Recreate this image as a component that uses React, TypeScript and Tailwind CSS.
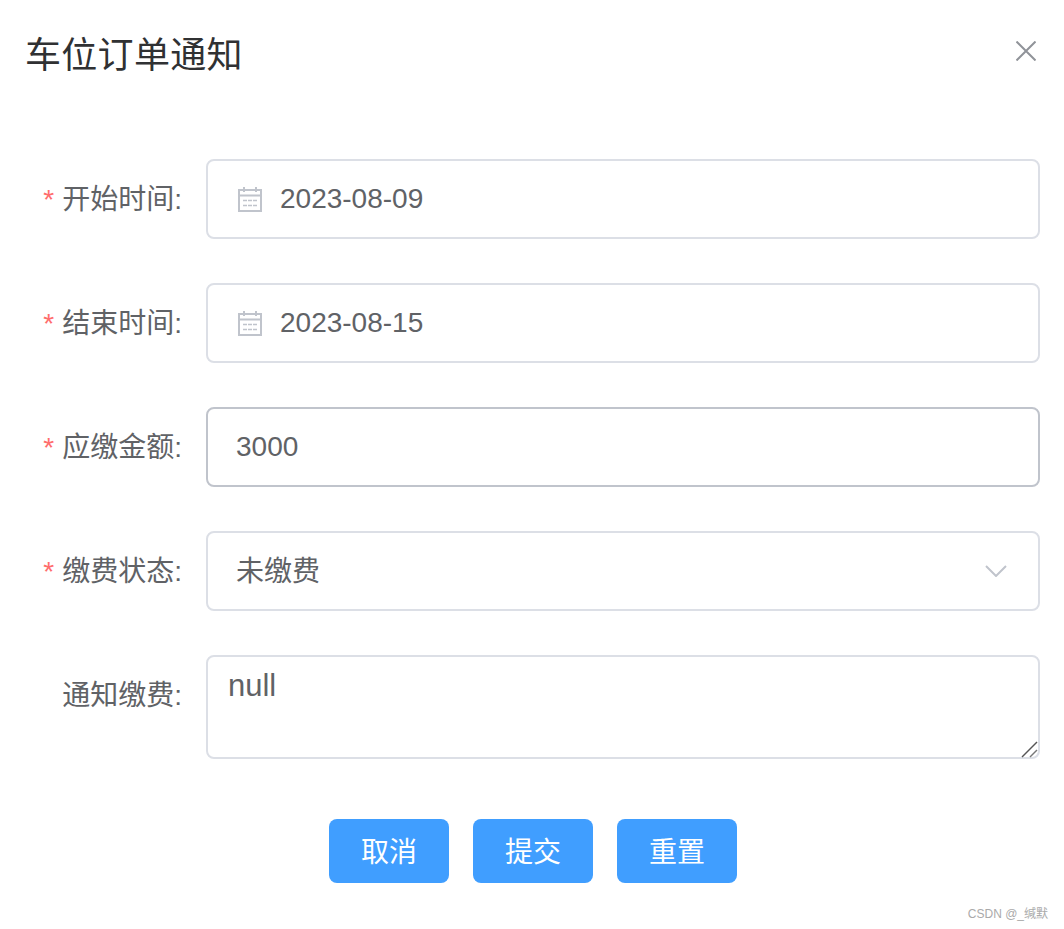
import type { ReactNode } from 'react';

const FONT = "font-['Liberation_Sans','Noto_Sans_CJK_SC',sans-serif]";

function CalendarIcon() {
  return (
    <svg width="24" height="25" viewBox="0 0 24 25" fill="none" className="mr-[18px] shrink-0 text-[#c0c4cc]">
      <path d="M1 3h22v21H1zM1 8.500h22M6 0v5M18 0v5" stroke="currentColor" strokeWidth="2" />
      <path d="M5 13.500h4M10 13.500h4M15 13.500h4M5 18.500h4M10 18.500h4M15 18.500h4" stroke="currentColor" strokeWidth="1.500" />
    </svg>
  );
}

function Row({ label, required = true, children }: { label: string; required?: boolean; children: ReactNode }) {
  return (
    <div className="mb-[44px] flex">
      <label className="h-[80px] w-[206px] shrink-0 pr-[24px] text-right text-[28px] leading-[82px] text-[#606266]">
        {required && <span className="mr-[8px] text-[#ff6d6d]">*</span>}
        {label}:
      </label>
      <div className="relative min-w-0 flex-1">{children}</div>
    </div>
  );
}

export default function App() {
  return (
    <div className={`${FONT} relative h-[929px] w-[1064px] overflow-hidden bg-white`}>
      <div className="flex items-start justify-between pl-[25px] pr-[28px] pt-[32px]">
        <h2 className="text-[36px] leading-[48px] tracking-[0.3px] text-[#303133]">车位订单通知</h2>
        <svg width="20" height="20" viewBox="0 0 20 20" className="mt-[9px] text-[#909399]">
          <path d="M0.500 0.500l19 19M19.500 0.500l-19 19" stroke="currentColor" strokeWidth="2" />
        </svg>
      </div>

      <form className="pl-0 pr-[24px] pt-[79px]">
        <Row label="开始时间">
          <div className="flex h-[80px] items-center rounded-[8px] border-2 border-[#dcdfe6] pl-[30px] text-[28px] text-[#606266]">
            <CalendarIcon />
            2023-08-09
          </div>
        </Row>
        <Row label="结束时间">
          <div className="flex h-[80px] items-center rounded-[8px] border-2 border-[#dcdfe6] pl-[30px] text-[28px] text-[#606266]">
            <CalendarIcon />
            2023-08-15
          </div>
        </Row>
        <Row label="应缴金额">
          <input
            readOnly
            value="3000"
            className="block h-[80px] w-full rounded-[8px] border-2 border-[#c0c4cc] pl-[28px] text-[28px] text-[#606266] outline-none"
          />
        </Row>
        <Row label="缴费状态">
          <div className="flex h-[80px] items-center justify-between rounded-[8px] border-2 border-[#dcdfe6] pl-[28px] pr-[31px] text-[28px] leading-[32px] text-[#606266]">
            <span className="pt-[2px]">未缴费</span>
            <svg width="22" height="12" viewBox="0 0 22 12" className="text-[#c0c4cc]">
              <path d="M1 1l10 10L21 1" fill="none" stroke="currentColor" strokeWidth="2" />
            </svg>
          </div>
        </Row>
        <Row label="通知缴费" required={false}>
          <textarea
            readOnly
            value="null"
            className="block h-[104px] w-full resize-none rounded-[8px] border-2 border-[#dcdfe6] px-[20px] py-[9px] text-[31px] leading-[40px] text-[#606266] outline-none"
          />
          {/* resize grip, drawn at the size of the zoomed page */}
          <svg width="18" height="18" viewBox="0 0 18 18" className="absolute bottom-[1px] right-[1px] text-[#555]">
            <path d="M1 17L16 2" stroke="currentColor" strokeWidth="1.500" />
            <path d="M9 17l7-7" stroke="#777" strokeWidth="1.500" />
          </svg>
        </Row>
      </form>

      <div className="flex justify-center gap-[24px] pl-[2px] pt-[16px]">
        {['取消', '提交', '重置'].map((text) => (
          <button
            key={text}
            type="button"
            className="h-[64px] w-[120px] rounded-[8px] bg-[#409eff] pt-[3px] text-[28px] text-white"
          >
            {text}
          </button>
        ))}
      </div>

      <div className="absolute bottom-[7px] right-[16px] text-[12px] leading-[16px] text-[#aaa]">CSDN @_缄默</div>
    </div>
  );
}
